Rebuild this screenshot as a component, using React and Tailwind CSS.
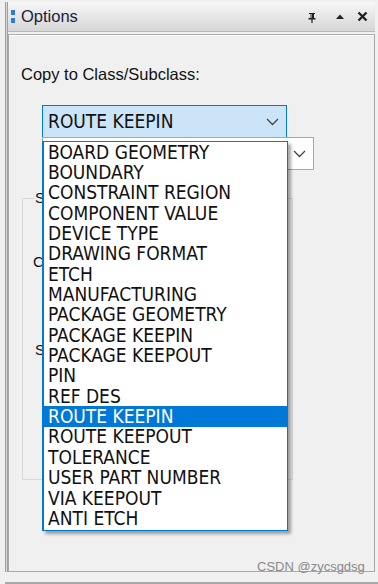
import React from "react";

const items = [
  "BOARD GEOMETRY",
  "BOUNDARY",
  "CONSTRAINT REGION",
  "COMPONENT VALUE",
  "DEVICE TYPE",
  "DRAWING FORMAT",
  "ETCH",
  "MANUFACTURING",
  "PACKAGE GEOMETRY",
  "PACKAGE KEEPIN",
  "PACKAGE KEEPOUT",
  "PIN",
  "REF DES",
  "ROUTE KEEPIN",
  "ROUTE KEEPOUT",
  "TOLERANCE",
  "USER PART NUMBER",
  "VIA KEEPOUT",
  "ANTI ETCH",
];

const Chevron = ({ className }) => (
  <svg width="13" height="8" viewBox="0 0 13 8" className={className}>
    <path d="M1 1 L6.5 6.5 L12 1" fill="none" stroke="#444" strokeWidth="1.3" />
  </svg>
);

const App = () => {
  const selected = "ROUTE KEEPIN";
  const listFont = { fontFamily: "'DejaVu Sans Condensed', 'Liberation Sans Narrow', 'Liberation Sans', sans-serif" };

  return (
    <div className="w-[378px] h-[584px] bg-[#f0f0f0] relative overflow-hidden" style={{ fontFamily: "'Liberation Sans', Arial, sans-serif" }}>
      <div className="flex h-[572px] pt-[2px]">
        {/* left frame line */}
        <div className="w-[8px] flex shrink-0 pl-[5px]">
          <div className="w-[3px] border-l border-r border-[#a0a0a0] bg-[#d8d8d8]" />
        </div>
        <div className="flex-1 flex flex-col pr-[3px]">
          {/* title bar */}
          <div className="h-[30px] flex items-center bg-gradient-to-b from-[#f7f7f7] to-[#d6d6d6] border-b border-[#b8b8b8]">
            <div className="flex flex-col gap-[3px] ml-[3px] mr-[6px]">
              <div className="w-[4px] h-[5px] bg-[#2a7de1]" />
              <div className="w-[4px] h-[5px] bg-[#2a7de1]" />
            </div>
            <span className="text-[16.5px] text-[#1c2040]">Options</span>
            <div className="ml-auto flex items-center mr-[7px]">
              <svg width="10" height="12" viewBox="0 0 10 12" className="mr-[18px] mt-[2px]">
                <path d="M2 1 H8 V2 H7 V6 H8.5 V7.5 H5.6 V11 H4.4 V7.5 H1.5 V6 H3 V2 H2 Z" fill="#222" />
                <path d="M4 2 V6" stroke="#f0f0f0" strokeWidth="1" />
              </svg>
              <svg width="10" height="7" viewBox="0 0 10 7" className="mr-[12px]">
                <path d="M1 6 L5 1.5 L9 6 Z" fill="#222" />
              </svg>
              <svg width="11" height="11" viewBox="0 0 11 11">
                <path d="M1.5 1.5 L9.5 9.5 M9.5 1.5 L1.5 9.5" stroke="#222" strokeWidth="2.4" />
              </svg>
            </div>
          </div>

          {/* panel */}
          <div className="flex-1 mt-[2px] border border-[#a8a8a8] border-t-[#b0b0b0] bg-[#f0f0f0] flex flex-col">
            <div className="border-t border-white flex-1 pl-[12px] pt-[29px]">
              <div className="text-[16.5px] text-[#111] leading-[18px]">Copy to Class/Subclass:</div>

              <div className="ml-[21px] mt-[22px] w-[245px] h-[33px] bg-[#cce4f7] border border-[#0078d7] flex items-center pl-[5px] pr-[7px]" style={listFont}>
                <span className="text-[19px] text-[#111] leading-none">ROUTE KEEPIN</span>
                <Chevron className="ml-auto" />
              </div>

              {/* second combo, mostly hidden */}
              <div className="ml-[21px] w-[272px] h-[33px] bg-white border border-[#a8a8a8] flex items-center justify-end pr-[7px] -mt-[1px]">
                <Chevron />
              </div>

              {/* group box */}
              <div className="ml-[1px] mt-[28px] w-[271px] h-[282px] border border-[#d8d8d8] relative">
                <span className="absolute -top-[9px] left-[11px] px-[1px] bg-[#f0f0f0] text-[15px] text-[#111] leading-none">S</span>
                <div className="pl-[10px] pt-[55px] text-[15px] text-[#111] leading-none">C</div>
                <div className="pl-[12px] pt-[73px] text-[15px] text-[#111] leading-none">S</div>
              </div>
            </div>
          </div>
        </div>
      </div>

      {/* dropdown list */}
      <div
        className="absolute left-[42px] top-[141px] w-[246px] bg-white border border-[#0078d7] border-l-2 shadow-[3px_3px_3px_rgba(0,0,0,0.35)] pb-[1px]"
        style={listFont}
      >
        {items.map((it) => (
          <div
            key={it}
            className={
              "h-[20.35px] flex items-center pl-[4px] text-[19px] leading-none whitespace-nowrap " +
              (it === selected ? "bg-[#0078d7] text-white" : "text-[#111]")
            }
          >
            {it}
          </div>
        ))}
      </div>

      <div className="absolute left-[257px] top-[560px] text-[13px] text-[#8a8a8a] leading-none whitespace-nowrap">CSDN @zycsgdsg</div>

      {/* bottom box edge */}
      <div className="absolute left-[5px] top-[582px] w-[373px] h-[4px] border-t-2 border-l-2 border-[#a8a8a8] bg-[#f0f0f0]" />
    </div>
  );
};

export default App;
